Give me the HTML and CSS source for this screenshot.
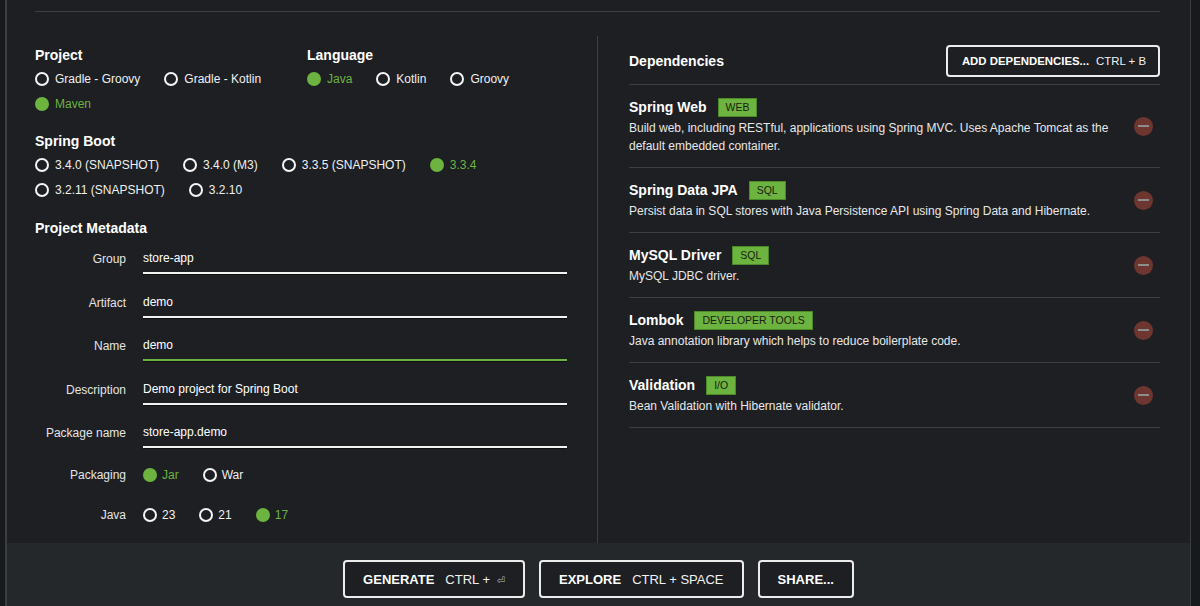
FILE: index.html
```html
<!DOCTYPE html>
<html lang="en">
<head>
    <meta charset="UTF-8">
    <meta name="viewport" content="width=device-width, initial-scale=1.0">
    <title>Spring Initializr</title>
    <link rel="stylesheet" href="styles.css">
</head>
<body>
    <div class="page">
        <div class="topbar"></div>
        <div class="main">
            <div class="col-left">
                <div class="row-top">
                    <div class="section project">
                        <h2>Project</h2>
                        <div class="radios">
                            <span class="radio"><span class="dot"></span>Gradle - Groovy</span>
                            <span class="radio"><span class="dot"></span>Gradle - Kotlin</span>
                            <span class="radio on"><span class="dot"></span>Maven</span>
                        </div>
                    </div>
                    <div class="section">
                        <h2>Language</h2>
                        <div class="radios">
                            <span class="radio on"><span class="dot"></span>Java</span>
                            <span class="radio"><span class="dot"></span>Kotlin</span>
                            <span class="radio"><span class="dot"></span>Groovy</span>
                        </div>
                    </div>
                </div>
                <div class="section boot">
                    <h2>Spring Boot</h2>
                    <div class="radios">
                        <span class="radio"><span class="dot"></span>3.4.0 (SNAPSHOT)</span>
                        <span class="radio"><span class="dot"></span>3.4.0 (M3)</span>
                        <span class="radio"><span class="dot"></span>3.3.5 (SNAPSHOT)</span>
                        <span class="radio on"><span class="dot"></span>3.3.4</span>
                        <span class="radio"><span class="dot"></span>3.2.11 (SNAPSHOT)</span>
                        <span class="radio"><span class="dot"></span>3.2.10</span>
                    </div>
                </div>
                <div class="section">
                    <h2 class="meta-title">Project Metadata</h2>
                    <div class="field">
                        <span class="field-label">Group</span>
                        <div class="input">store-app</div>
                    </div>
                    <div class="field">
                        <span class="field-label">Artifact</span>
                        <div class="input">demo</div>
                    </div>
                    <div class="field">
                        <span class="field-label">Name</span>
                        <div class="input focus">demo</div>
                    </div>
                    <div class="field">
                        <span class="field-label">Description</span>
                        <div class="input">Demo project for Spring Boot</div>
                    </div>
                    <div class="field">
                        <span class="field-label">Package name</span>
                        <div class="input">store-app.demo</div>
                    </div>
                    <div class="field choice">
                        <span class="field-label">Packaging</span>
                        <div class="radios small">
                            <span class="radio on"><span class="dot"></span>Jar</span>
                            <span class="radio"><span class="dot"></span>War</span>
                        </div>
                    </div>
                    <div class="field choice">
                        <span class="field-label">Java</span>
                        <div class="radios small">
                            <span class="radio"><span class="dot"></span>23</span>
                            <span class="radio"><span class="dot"></span>21</span>
                            <span class="radio on"><span class="dot"></span>17</span>
                        </div>
                    </div>
                </div>
            </div>

            <div class="col-right">
                <div class="deps-head">
                    <h2>Dependencies</h2>
                    <button class="btn small-btn"><b>ADD DEPENDENCIES...</b><span>CTRL + B</span></button>
                </div>
                <div class="dep">
                    <div class="dep-body">
                        <div class="dep-title">Spring Web <span class="badge">WEB</span></div>
                        <div class="dep-desc">Build web, including RESTful, applications using Spring MVC. Uses Apache Tomcat as the default embedded container.</div>
                    </div>
                    <span class="remove"></span>
                </div>
                <div class="dep">
                    <div class="dep-body">
                        <div class="dep-title">Spring Data JPA <span class="badge">SQL</span></div>
                        <div class="dep-desc">Persist data in SQL stores with Java Persistence API using Spring Data and Hibernate.</div>
                    </div>
                    <span class="remove"></span>
                </div>
                <div class="dep">
                    <div class="dep-body">
                        <div class="dep-title">MySQL Driver <span class="badge">SQL</span></div>
                        <div class="dep-desc">MySQL JDBC driver.</div>
                    </div>
                    <span class="remove"></span>
                </div>
                <div class="dep">
                    <div class="dep-body">
                        <div class="dep-title">Lombok <span class="badge">DEVELOPER TOOLS</span></div>
                        <div class="dep-desc">Java annotation library which helps to reduce boilerplate code.</div>
                    </div>
                    <span class="remove"></span>
                </div>
                <div class="dep">
                    <div class="dep-body">
                        <div class="dep-title">Validation <span class="badge">I/O</span></div>
                        <div class="dep-desc">Bean Validation with Hibernate validator.</div>
                    </div>
                    <span class="remove"></span>
                </div>
            </div>
        </div>

        <div class="footer">
            <button class="btn"><b>GENERATE</b><span>CTRL + <span class="enter">&#9166;</span></span></button>
            <button class="btn"><b>EXPLORE</b><span>CTRL + SPACE</span></button>
            <button class="btn"><b class="only">SHARE...</b></button>
        </div>
    </div>
</body>
</html>
```

FILE: styles.css
```css
* {
    box-sizing: border-box;
}

html, body {
    margin: 0;
    height: 606px;
    overflow: hidden;
}

body {
    background: #17191c;
    font-family: "Liberation Sans", Arial, sans-serif;
    font-size: 12px;
    color: #f0f0f0;
}

.page {
    margin-left: 5px;
    width: 1186px;
    height: 606px;
    border-left: 2px solid #3a3d41;
    border-right: 1px solid #3a3d41;
    background: #1d1f23;
    display: flex;
    flex-direction: column;
}

.topbar {
    height: 12px;
    margin: 0 30px 0 28px;
    border-bottom: 1px solid #3c3f43;
    flex-shrink: 0;
}

.main {
    flex: 1;
    display: grid;
    grid-template-columns: 563px 1fr;
    padding: 24px 30px 0 28px;
}

h2 {
    margin: 0 0 2px;
    font-size: 14px;
    line-height: 18px;
    font-weight: bold;
    color: #fff;
}

/* left column */
.col-left {
    border-right: 1px solid #3c3f43;
    padding: 10px 30px 0 0;
}

.row-top {
    display: flex;
    margin-bottom: 16px;
}

.project {
    width: 272px;
}

.boot {
    margin-bottom: 17px;
}

.radios {
    display: flex;
    flex-wrap: wrap;
}

.radio {
    display: flex;
    align-items: center;
    height: 25px;
    margin-right: 24px;
    color: #f0f0f0;
}

.dot {
    width: 14px;
    height: 14px;
    border: 2px solid #f5f5f5;
    border-radius: 50%;
    margin-right: 6px;
}

.radio.on {
    color: #6db33f;
}

.radio.on .dot {
    background: #6db33f;
    border-color: #6db33f;
}

.radios.small .radio {
    height: 27px;
    margin-right: 24px;
}

.radios.small .dot {
    margin-right: 5px;
}

.meta-title {
    margin-bottom: 7px;
}

.field {
    display: flex;
    margin-bottom: 13.5px;
}

.field-label {
    width: 91px;
    margin-right: 17px;
    text-align: right;
    padding-top: 6px;
    line-height: 18px;
    color: #e4e4e4;
}

.input {
    flex: 1;
    padding: 5px 0;
    line-height: 18px;
    color: #fff;
    border-bottom: 2px solid #f2f2f2;
    box-shadow: 0 1px 0 #0f1012;
}

.input.focus {
    border-bottom-color: #6db33f;
}

.field.choice {
    height: 27px;
    margin-bottom: 13px;
}

.field.choice .field-label {
    padding-top: 0;
    line-height: 27px;
}

/* right column */
.col-right {
    padding: 9px 0 0 31px;
}

.deps-head {
    display: flex;
    justify-content: space-between;
    align-items: center;
    padding-bottom: 7px;
    border-bottom: 1px solid #3c3f43;
}

.deps-head h2 {
    margin: 0;
}

.btn {
    display: flex;
    align-items: center;
    height: 38px;
    padding: 0 18px;
    border: 2px solid #ececec;
    border-radius: 4px;
    background: #1d1f23;
    color: #f2f2f2;
    font-family: "Liberation Sans", Arial, sans-serif;
    font-size: 13px;
    cursor: pointer;
}

.btn b {
    color: #fff;
    margin-right: 11px;
}

.btn b.only {
    margin-right: 0;
}

.small-btn {
    height: 32px;
    padding: 0 12px 0 14px;
    font-size: 11.4px;
}

.small-btn b {
    margin-right: 7px;
}

.enter {
    font-family: "DejaVu Sans", sans-serif;
    font-size: 10px;
    color: #b8b8b8;
    margin-left: 3px;
}

.dep {
    display: flex;
    align-items: center;
    padding: 12px 0;
    border-bottom: 1px solid #3c3f43;
}

.dep-body {
    flex: 1;
}

.dep-title {
    display: flex;
    align-items: center;
    height: 20px;
    font-size: 14px;
    font-weight: bold;
    color: #fff;
}

.badge {
    height: 19px;
    line-height: 17px;
    padding: 0 7px;
    margin-left: 11px;
    background: #6db33f;
    border: 1px solid #4c8a27;
    color: #1b2114;
    font-size: 10.5px;
    font-weight: normal;
}

.dep-desc {
    margin-top: 2px;
    line-height: 18px;
    color: #e8e8e8;
    padding-right: 20px;
}

.remove {
    position: relative;
    width: 19px;
    height: 19px;
    margin-right: 7px;
    border-radius: 50%;
    background: #6e3631;
    flex-shrink: 0;
}

.remove::after {
    content: "";
    position: absolute;
    left: 4px;
    top: 8px;
    width: 11px;
    height: 2px;
    background: #8d8d8d;
}

/* footer */
.footer {
    height: 63px;
    flex-shrink: 0;
    display: flex;
    justify-content: center;
    gap: 14px;
    padding-top: 17px;
    background: #25282b;
}
```
